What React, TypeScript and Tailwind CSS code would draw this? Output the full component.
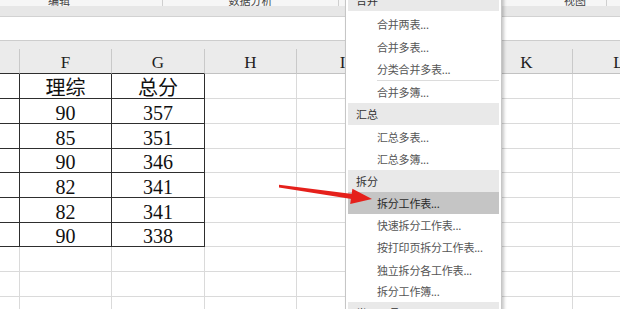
import React from "react"

const cols = [
  { w: "w-[20px]", letter: "" },
  { w: "w-[92px]", letter: "F" },
  { w: "w-[93px]", letter: "G" },
  { w: "w-[92px]", letter: "H" },
  { w: "w-[92px]", letter: "I" },
  { w: "w-[92px]", letter: "" },
  { w: "w-[92px]", letter: "K" },
  { w: "w-[92px]", letter: "L" },
]

const rows = [
  { h: "h-[25px]", cells: ["", "理综", "总分"] },
  { h: "h-[25px]", cells: ["", "90", "357"] },
  { h: "h-[25px]", cells: ["", "85", "351"] },
  { h: "h-[24px]", cells: ["", "90", "346"] },
  { h: "h-[25px]", cells: ["", "82", "341"] },
  { h: "h-[25px]", cells: ["", "82", "341"] },
  { h: "h-[24px]", cells: ["", "90", "338"] },
  { h: "h-[25px]", cells: [] },
  { h: "h-[25px]", cells: [] },
  { h: "h-[24px]", cells: [] },
  { h: "h-[25px]", cells: [] },
]

type MenuRow =
  | { kind: "header"; label: string; h: string }
  | { kind: "item"; label: string; h: string; active?: boolean }
  | { kind: "sep" }
  | { kind: "gap"; h: string }

const menu: MenuRow[] = [
  { kind: "header", label: "合并", h: "h-[22px]" },
  { kind: "gap", h: "h-[2px]" },
  { kind: "item", label: "合并两表...", h: "h-[23px]" },
  { kind: "item", label: "合并多表...", h: "h-[22px]" },
  { kind: "item", label: "分类合并多表...", h: "h-[22px]" },
  { kind: "sep" },
  { kind: "item", label: "合并多簿...", h: "h-[22px]" },
  { kind: "header", label: "汇总", h: "h-[22px]" },
  { kind: "gap", h: "h-[1px]" },
  { kind: "item", label: "汇总多表...", h: "h-[22px]" },
  { kind: "item", label: "汇总多簿...", h: "h-[22px]" },
  { kind: "header", label: "拆分", h: "h-[22px]" },
  { kind: "item", label: "拆分工作表...", h: "h-[22px]", active: true },
  { kind: "item", label: "快速拆分工作表...", h: "h-[22px]" },
  { kind: "item", label: "按打印页拆分工作表...", h: "h-[23px]" },
  { kind: "item", label: "独立拆分各工作表...", h: "h-[22px]" },
  { kind: "item", label: "拆分工作簿...", h: "h-[21px]" },
  { kind: "header", label: "常用工具", h: "h-[22px]" },
]

const cjk = { fontFamily: '"Noto Sans CJK SC", "Noto Sans", sans-serif' }
const serif = { fontFamily: '"Liberation Serif", "Noto Sans CJK SC", serif' }

function RibbonStrip() {
  return (
    <div className="flex h-[6px] overflow-hidden bg-[#f6f6f6] text-[11px] text-[#444]" style={cjk}>
      <div className="flex w-[163px] items-end justify-center border-r border-[#cfcfcf] pr-[44px]">
        <span className="leading-[12px]">编辑</span>
      </div>
      <div className="flex w-[176px] items-end justify-center border-r border-[#cfcfcf]">
        <span className="leading-[12px]">数据分析</span>
      </div>
      <div className="flex w-[268px] items-end justify-end border-r border-[#cfcfcf] pr-[20px]">
        <span className="leading-[12px]">视图</span>
      </div>
    </div>
  )
}

function ColumnHeader() {
  return (
    <div className="flex h-[33px] items-end bg-[#ebebeb]">
      {cols.map((c, i) => (
        <div
          key={i}
          className={`${c.w} flex h-[25px] shrink-0 items-end justify-center border-b border-r border-r-[#c9c9c9] text-[17px] leading-[20px] text-[#1e1e1e] ${
            i < 3 ? "border-b-[#2e2e2e]" : "border-b-[#c2c2c2]"
          }`}
          style={serif}
        >
          {c.letter}
        </div>
      ))}
    </div>
  )
}

function Grid() {
  return (
    <div className="flex flex-col">
      {rows.map((r, ri) => (
        <div key={ri} className={`flex ${r.h}`}>
          {cols.map((c, ci) => {
            const inTable = ri < 7 && ci < 3
            return (
              <div
                key={ci}
                className={`${c.w} flex h-full shrink-0 items-end justify-center border-b border-r text-[20px] leading-[20px] text-[#111] ${
                  inTable ? "border-[#2e2e2e]" : "border-[#dadada]"
                }`}
                style={serif}
              >
                {r.cells[ci] ?? ""}
              </div>
            )
          })}
        </div>
      ))}
    </div>
  )
}

function ToolMenu() {
  return (
    <div
      className="absolute left-[345px] top-[-12px] flex w-[157px] flex-col border border-[#c6c6c6] bg-white px-[2px] text-[11px] shadow-[2px_2px_3px_rgba(0,0,0,0.22)]"
      style={cjk}
    >
      {menu.map((m, i) => {
        if (m.kind === "gap") return <div key={i} className={m.h} />
        if (m.kind === "sep")
          return <div key={i} className="ml-[29px] h-px bg-[#dcdcdc]" />
        if (m.kind === "header")
          return (
            <div key={i} className={`${m.h} flex items-center bg-[#e9e9e9] pl-[8px] text-[#333]`}>
              {m.label}
            </div>
          )
        return (
          <div
            key={i}
            className={`${m.h} flex items-center pl-[29px] tracking-[-0.2px] ${
              m.active ? "bg-[#c5c5c5] text-[#2a2a2a]" : "text-[#555]"
            }`}
          >
            {m.label}
          </div>
        )
      })}
    </div>
  )
}

function RedArrow() {
  return (
    <svg className="absolute left-0 top-0" width="620" height="309" viewBox="0 0 620 309">
      <polygon points="279,184.8 352.5,194 351.6,199 279,187.4" fill="#e5201b" />
      <polygon points="372,199 352.4,188.8 350.2,204" fill="#e5201b" />
    </svg>
  )
}

export default function App() {
  return (
    <div className="relative h-[309px] w-[620px] overflow-hidden bg-white">
      <RibbonStrip />
      <div className="h-[11px] border-b border-[#d2d2d2] bg-[#e7e7e7]" />
      <div className="h-[24px] border-b border-[#cdcdcd] bg-white" />
      <ColumnHeader />
      <Grid />
      <ToolMenu />
      <RedArrow />
    </div>
  )
}
